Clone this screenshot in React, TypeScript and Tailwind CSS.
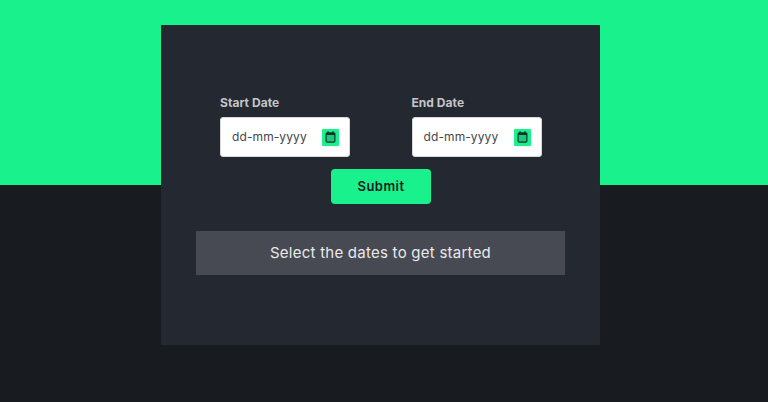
import React from 'react';

const DateField = ({ label }: { label: string }) => {
  return (
    <div className="w-[130px]">
      <div className="text-[12px] leading-[15px] font-bold text-[#c4c5c8] tracking-[0.05px]">{label}</div>
      <div className="mt-[7px] h-[40px] bg-white rounded-[3px] border border-[#d8d8d8] flex items-center justify-between pl-[11px] pr-[10px]">
        <span className="text-[12px] text-[#44464c] tracking-[0.1px] pb-[1px]">dd-mm-yyyy</span>
        {/* calendar picker */}
        <div className="w-[17px] h-[17px] rounded-[1px] bg-[#19f28c] flex items-center justify-center">
          <svg width="11" height="12" viewBox="0 0 11 12" fill="none">
            <path d="M3 0.3v2.2M8 0.3v2.2" stroke="#14302a" strokeWidth="1.2" />
            <rect x="1.1" y="1.9" width="8.8" height="9.3" rx="1.2" fill="#17c97a" stroke="#14302a" strokeWidth="1.2" />
            <rect x="1" y="2" width="9" height="2" fill="#14302a" />
          </svg>
        </div>
      </div>
    </div>
  );
};

const App = () => {
  return (
    <div
      className="h-[402px] w-full overflow-hidden pt-[25px] bg-[linear-gradient(to_bottom,#19f28c_0,#19f28c_185px,#181b20_185px,#181b20_100%)]"
      style={{ fontFamily: 'Inter, "Noto Sans", sans-serif' }}
    >
      <div className="w-[439px] h-[320px] ml-[161px] bg-[#242831] pt-[70px] px-[35px]">
        {/* Date inputs */}
        <div className="flex gap-[61.5px] pl-[24px]">
          <DateField label="Start Date" />
          <DateField label="End Date" />
        </div>

        <div className="flex justify-center mt-[12px] pl-[1px]">
          <button className="w-[100px] h-[35px] rounded-[4px] bg-[#19f28c] text-[#181b20] text-[13px] font-semibold tracking-[0.45px]">
            Submit
          </button>
        </div>

        {/* Message */}
        <div className="mt-[27px] w-[369px] h-[44px] bg-[#474a52] flex items-center justify-center text-[15px] text-[#e9e9ea] tracking-[0.25px]">
          Select the dates to get started
        </div>
      </div>
    </div>
  );
};

export default App;
